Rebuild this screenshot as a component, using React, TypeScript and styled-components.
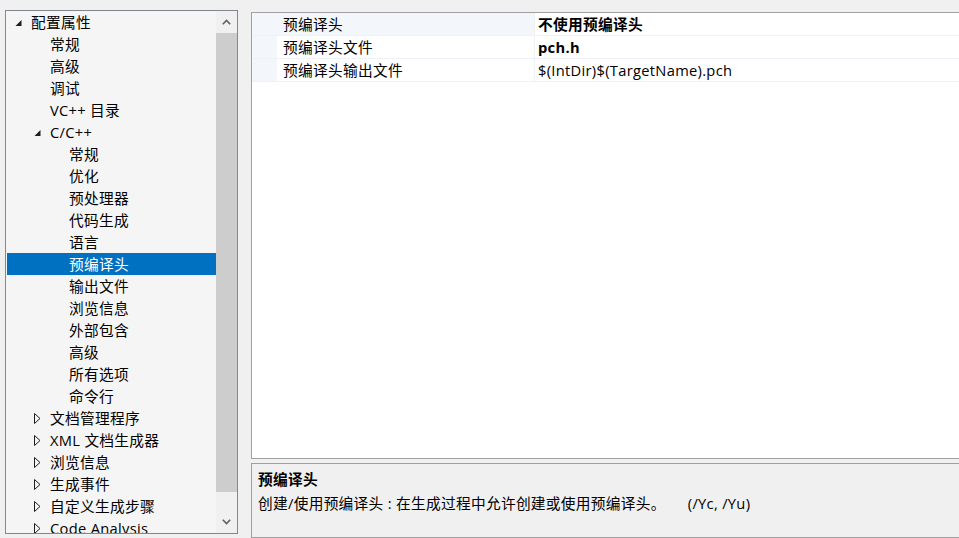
import React from "react";
import styled, { createGlobalStyle } from "styled-components";

const Global = createGlobalStyle`
  html, body { margin: 0; padding: 0; background: #f0f0f0; }
  body {
    font-family: "Open Sans", "Noto Sans CJK SC", sans-serif;
    font-size: 14.7px;
    letter-spacing: 0.3px;
    color: #000;
  }
`;

const Page = styled.div`
  width: 959px;
  height: 538px;
  box-sizing: border-box;
  padding: 10px 0 0 5px;
  display: flex;
  gap: 13px;
  overflow: hidden;
  background: #f0f0f0;
`;

const TreePanel = styled.div`
  width: 233px;
  height: 524px;
  box-sizing: border-box;
  border: 1px solid #828790;
  background: #f5f5f5;
  display: flex;
  overflow: hidden;
`;

const TreeList = styled.div`
  flex: 1;
  overflow: hidden;
  padding-left: 1px;
`;

const TreeRow = styled.div<{ $level: number; $selected?: boolean }>`
  height: 22px;
  line-height: 22px;
  display: flex;
  align-items: center;
  padding-left: ${(p) => p.$level * 19 + 7}px;
  background: ${(p) => (p.$selected ? "#0070c0" : "transparent")};
  color: ${(p) => (p.$selected ? "#fff" : "#000")};
  white-space: nowrap;
`;

const Expander = styled.span`
  width: 17px;
  height: 22px;
  flex: none;
  display: flex;
  align-items: center;
  padding-left: 1px;
  box-sizing: border-box;
`;

const Scrollbar = styled.div`
  width: 21px;
  flex: none;
  background: #f0f0f0;
  display: flex;
  flex-direction: column;
`;

const ScrollButton = styled.div`
  height: 22px;
  flex: none;
  display: flex;
  align-items: center;
  justify-content: center;
`;

const ScrollTrack = styled.div`
  flex: 1;
  display: flex;
  flex-direction: column;
`;

const Thumb = styled.div`
  height: 459px;
  background: #cdcdcd;
`;

const RightColumn = styled.div`
  width: 708px;
  display: flex;
  flex-direction: column;
  gap: 4px;
  padding-top: 2px;
`;

const GridPanel = styled.div`
  height: 447px;
  box-sizing: border-box;
  border: 1px solid #a0a0a0;
  border-right: none;
  background: #fff;
`;

const GridRow = styled.div`
  display: grid;
  grid-template-columns: 25px 258px 1fr;
  height: 23px;
  box-sizing: border-box;
  border-bottom: 1px solid #eef1f6;
`;

const Gutter = styled.div`
  background: #f3f6fb;
`;

const NameCell = styled.div<{ $active?: boolean }>`
  background: ${(p) => (p.$active ? "#f3f6fb" : "#fff")};
  padding-left: 6px;
  line-height: 22px;
  border-right: 1px solid #eef1f6;
  white-space: nowrap;
`;

const ValueCell = styled.div<{ $bold?: boolean }>`
  padding-left: 3px;
  line-height: 22px;
  font-weight: ${(p) => (p.$bold ? 700 : 400)};
  white-space: nowrap;
`;

const DescPanel = styled.div`
  height: 75px;
  box-sizing: border-box;
  border: 1px solid #a0a0a0;
  border-right: none;
  background: #f0f0f0;
  padding: 4px 6px 0;
`;

const DescTitle = styled.div`
  font-weight: 700;
  line-height: 22px;
`;

const DescText = styled.div`
  line-height: 22px;
  margin-top: 2px;
  white-space: nowrap;
`;

const Switch = styled.span`
  margin-left: 22px;
`;

const Expanded = () => (
  <svg width="7" height="22" viewBox="0 0 7 22">
    <polygon points="6.5,9 6.5,15 0.5,15" fill="#1e1e1e" />
  </svg>
);

const Collapsed = () => (
  <svg width="8" height="22" viewBox="0 0 8 22">
    <polygon points="0.5,6.5 6,11.5 0.5,16.5" fill="none" stroke="#1e1e1e" strokeWidth="1" />
  </svg>
);

const ChevronUp = () => (
  <svg width="9" height="6" viewBox="0 0 9 6">
    <polyline points="0.8,5.2 4.5,1.5 8.2,5.2" fill="none" stroke="#606060" strokeWidth="1.6" />
  </svg>
);

const ChevronDown = () => (
  <svg width="9" height="6" viewBox="0 0 9 6">
    <polyline points="0.8,0.8 4.5,4.5 8.2,0.8" fill="none" stroke="#606060" strokeWidth="1.6" />
  </svg>
);

type Node = { label: string; level: number; exp?: "open" | "closed"; selected?: boolean };

const nodes: Node[] = [
  { label: "配置属性", level: 0, exp: "open" },
  { label: "常规", level: 1 },
  { label: "高级", level: 1 },
  { label: "调试", level: 1 },
  { label: "VC++ 目录", level: 1 },
  { label: "C/C++", level: 1, exp: "open" },
  { label: "常规", level: 2 },
  { label: "优化", level: 2 },
  { label: "预处理器", level: 2 },
  { label: "代码生成", level: 2 },
  { label: "语言", level: 2 },
  { label: "预编译头", level: 2, selected: true },
  { label: "输出文件", level: 2 },
  { label: "浏览信息", level: 2 },
  { label: "外部包含", level: 2 },
  { label: "高级", level: 2 },
  { label: "所有选项", level: 2 },
  { label: "命令行", level: 2 },
  { label: "文档管理程序", level: 1, exp: "closed" },
  { label: "XML 文档生成器", level: 1, exp: "closed" },
  { label: "浏览信息", level: 1, exp: "closed" },
  { label: "生成事件", level: 1, exp: "closed" },
  { label: "自定义生成步骤", level: 1, exp: "closed" },
  { label: "Code Analysis", level: 1, exp: "closed" },
];

const props = [
  { name: "预编译头", value: "不使用预编译头", bold: true, active: true },
  { name: "预编译头文件", value: "pch.h", bold: true },
  { name: "预编译头输出文件", value: "$(IntDir)$(TargetName).pch" },
];

export default function App() {
  return (
    <>
      <Global />
      <Page>
        <TreePanel>
          <TreeList>
            {nodes.map((n, i) => (
              <TreeRow key={i} $level={n.level} $selected={n.selected}>
                <Expander>
                  {n.exp === "open" && <Expanded />}
                  {n.exp === "closed" && <Collapsed />}
                </Expander>
                {n.label}
              </TreeRow>
            ))}
          </TreeList>
          <Scrollbar>
            <ScrollButton>
              <ChevronUp />
            </ScrollButton>
            <ScrollTrack>
              <Thumb />
            </ScrollTrack>
            <ScrollButton>
              <ChevronDown />
            </ScrollButton>
          </Scrollbar>
        </TreePanel>
        <RightColumn>
          <GridPanel>
            {props.map((p, i) => (
              <GridRow key={i}>
                <Gutter />
                <NameCell $active={p.active}>{p.name}</NameCell>
                <ValueCell $bold={p.bold}>{p.value}</ValueCell>
              </GridRow>
            ))}
          </GridPanel>
          <DescPanel>
            <DescTitle>预编译头</DescTitle>
            <DescText>
              创建/使用预编译头 : 在生成过程中允许创建或使用预编译头。
              <Switch>(/Yc, /Yu)</Switch>
            </DescText>
          </DescPanel>
        </RightColumn>
      </Page>
    </>
  );
}
